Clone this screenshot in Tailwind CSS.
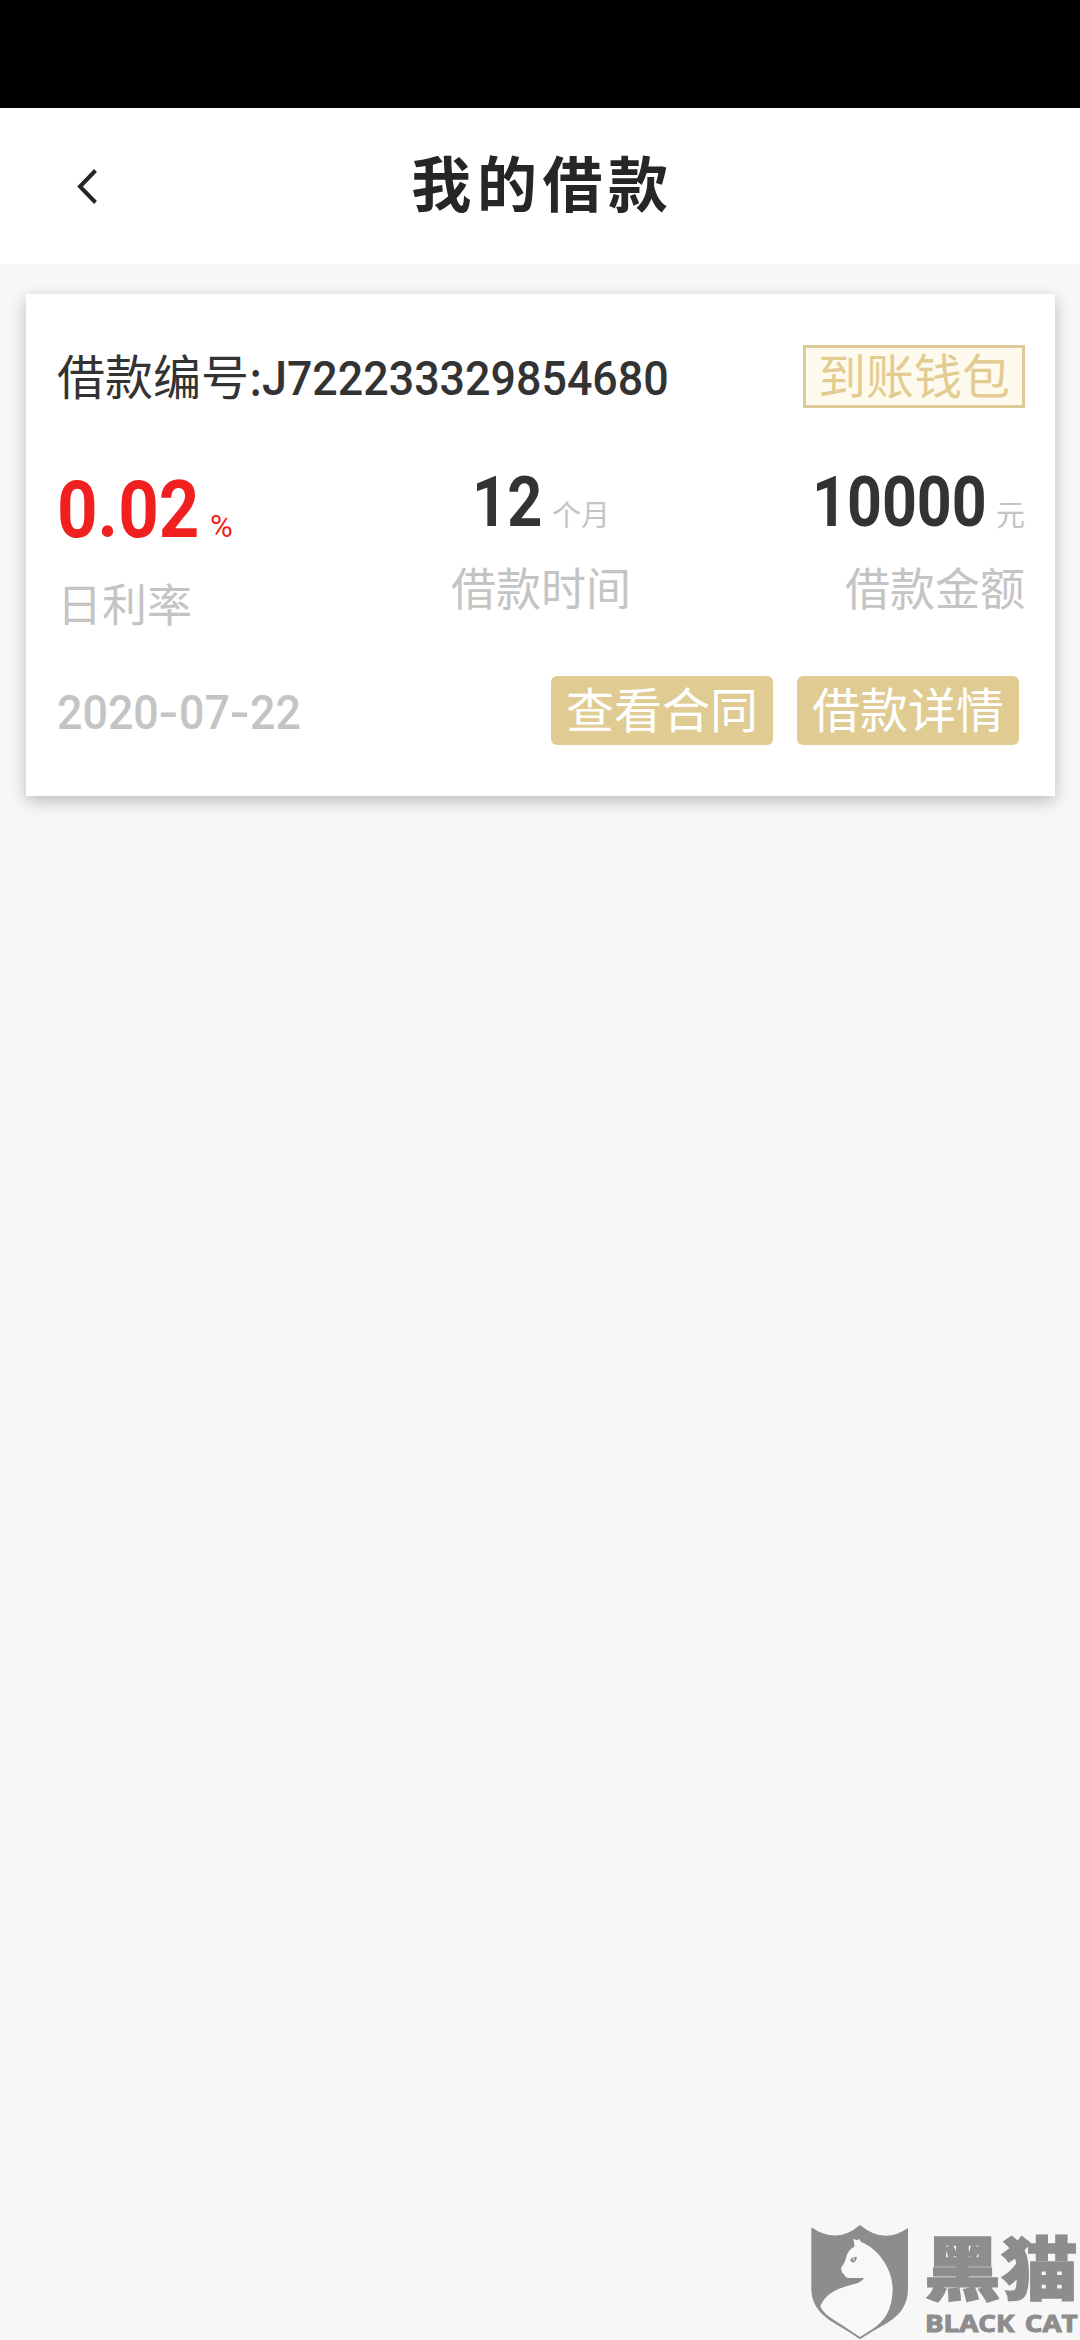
<!DOCTYPE html>
<html lang="zh-CN">
<head>
    <meta charset="UTF-8">
    <meta name="viewport" content="width=device-width, initial-scale=1.0">
    <script src="https://cdn.jsdelivr.net/npm/@tailwindcss/browser@4"></script>
    <title>我的借款</title>
</head>
<body class="flex h-[2340px] w-[1080px] flex-col overflow-hidden bg-[#f7f7f7] font-['Noto_Sans_CJK_SC',sans-serif] text-[#333333]">
    <!-- Status Bar -->
    <div class="h-[108px] shrink-0 bg-black"></div>

    <!-- Header -->
    <header class="grid h-[156px] shrink-0 grid-cols-[200px_1fr_200px] items-center bg-white">
        <button class="ml-[74px] w-[26px]">
            <svg class="block h-[38px] w-[26px]" viewBox="0 0 26 38" fill="none" stroke="#262629" stroke-width="4">
                <path d="M21.5 3.5 L6 19.5 L21.5 35.5"/>
            </svg>
        </button>
        <h1 class="pb-[11px] pl-[5px] text-center text-[60px] leading-[90px] font-bold tracking-[5.6px] text-[#262629]">我的借款</h1>
    </header>

    <!-- Loan Card -->
    <main class="mx-[26px] mt-[30px] flex h-[502px] w-[1029px] shrink-0 flex-col bg-white pr-[30px] pl-[31px] shadow-[0_5px_15px_rgba(0,0,0,0.24)]">
        <div class="mt-[51px] flex h-[63px] items-center justify-between">
            <p class="flex items-baseline text-[48px] leading-[63px] whitespace-nowrap">
                <span>借款编号:</span>
                <span class="inline-block origin-left scale-x-[0.914] font-['Roboto',sans-serif] text-[49px] font-medium">J722233329854680</span>
            </p>
            <span class="flex h-[63px] w-[222px] shrink-0 items-center justify-center border-3 border-[#dccb97] bg-[#fffaee] pb-[8px] text-[48px] leading-[56px] text-[#e2cc92]">到账钱包</span>
        </div>

        <div class="mt-[58px] flex h-[170px] justify-between">
            <div class="w-[320px]">
                <p class="-mt-[1px] flex items-baseline leading-[90px] text-[#f02020]">
                    <span class="w-[153px] origin-left scale-x-[0.885] font-['Roboto',sans-serif] text-[80px] font-bold">0.02</span>
                    <span class="font-['Roboto',sans-serif] text-[31px]">%</span>
                </p>
                <p class="mt-[1px] text-[45px] leading-[60px] text-[#c4c4c4]">日利率</p>
            </div>
            <div class="flex w-[320px] flex-col items-center">
                <p class="-mt-[4px] mb-[4px] flex items-baseline leading-[80px]">
                    <span class="w-[80px] origin-left scale-x-[0.875] font-['Roboto',sans-serif] text-[70px] font-bold">12</span>
                    <span class="text-[29px] text-[#c4c4c4]">个月</span>
                </p>
                <p class="text-[45px] leading-[60px] text-[#c4c4c4]">借款时间</p>
            </div>
            <div class="flex w-[320px] flex-col items-end">
                <p class="-mt-[4px] mb-[4px] flex items-baseline leading-[80px]">
                    <span class="w-[184px] origin-left scale-x-[0.87] font-['Roboto',sans-serif] text-[70px] font-bold">10000</span>
                    <span class="text-[29px] text-[#c4c4c4]">元</span>
                </p>
                <p class="text-[45px] leading-[60px] text-[#c4c4c4]">借款金额</p>
            </div>
        </div>

        <div class="mt-[40px] flex h-[69px] items-center justify-between pr-[6px]">
            <p class="origin-left scale-x-[0.914] pt-[3px] font-['Roboto',sans-serif] text-[49px] leading-[69px] font-medium text-[#c4c4c4]">2020<span class="inline-block w-[22px] origin-left scale-x-[1.3]">-</span>07<span class="inline-block w-[22px] origin-left scale-x-[1.3]">-</span>22</p>
            <div class="flex gap-6">
                <button class="h-[69px] w-[222px] rounded-md bg-[#e0cc93] pb-[6px] text-[48px] leading-[63px] text-white">查看合同</button>
                <button class="h-[69px] w-[222px] rounded-md bg-[#e0cc93] pb-[6px] text-[48px] leading-[63px] text-white">借款详情</button>
            </div>
        </div>
    </main>

    <!-- Black Cat Logo -->
    <footer class="mt-auto flex justify-end">
        <svg class="block h-[140px] w-[290px]" viewBox="0 0 870 420" fill="#8e8c8d">
            <path d="M64 82 Q140 135 210 75 Q282 135 354 84 V265 C354 325 320 352 285 373 Q245 395 210 418 Q178 396 138 373 C95 347 64 318 64 265 Z"/>
            <path fill="#f8f8f8" d="M190 116 L201 121 L209 117 L213 126 C265 145 310 210 308 270 C306 330 285 362 248 387 L210 411 L150 371 C120 354 98 338 91 319 C107 279 145 264 190 253 Q215 247 222 234 H178 C170 235 165 229 163 224 C154 218 152 208 155 200 C162 192 166 182 169 170 C174 153 184 146 194 139 Z"/>
            <path d="M181 180 Q182 173 200 170 Q201 183 189 188 Q183 187 181 180 Z"/>
            <path fill="#f8f8f8" d="M188 176 L194 174 L192 184 Z"/>
            <text x="402" y="286" font-family="'Noto Sans CJK SC', sans-serif" font-size="208" font-weight="900" textLength="462" lengthAdjust="spacingAndGlyphs" stroke="#8e8c8d" stroke-width="4">黑猫</text>
            <text x="405" y="397" font-family="'Open Sans', sans-serif" font-size="68" font-weight="700" word-spacing="8" textLength="458" lengthAdjust="spacingAndGlyphs" stroke="#8e8c8d" stroke-width="3">BLACK CAT</text>
        </svg>
    </footer>
</body>
</html>
